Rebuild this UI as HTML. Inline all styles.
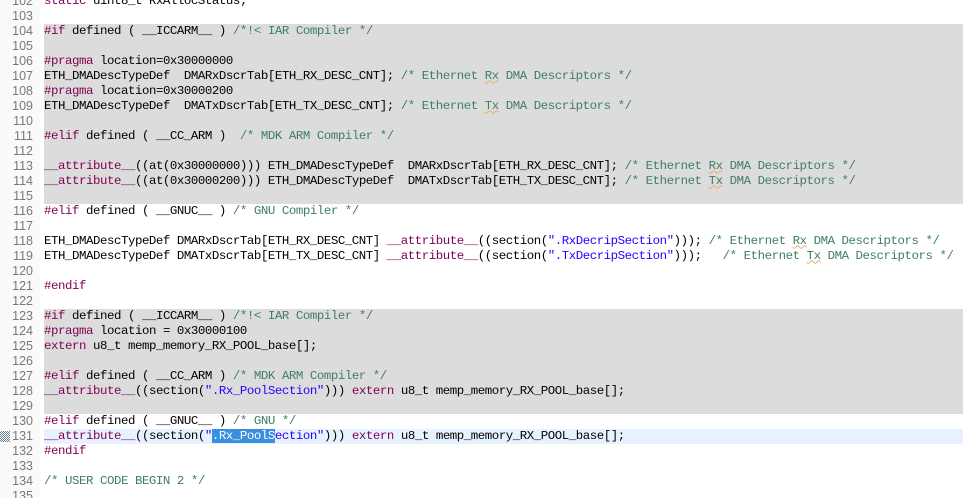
<!DOCTYPE html>
<html><head><meta charset="utf-8"><style>
html,body{margin:0;padding:0;background:#fff;width:963px;height:498px;overflow:hidden}
#w{position:relative;width:963px;height:498px}
.gut{position:absolute;left:0;top:0;width:40px;height:498px;background:#fafafa}
.l{position:absolute;left:0;width:963px;height:15px;font:12.4px/15px "Liberation Mono",monospace;letter-spacing:-0.44px;white-space:pre;color:#000}
.n{position:absolute;left:0;width:33px;text-align:right;color:#787878;font:12.5px/15px "Liberation Sans",sans-serif;letter-spacing:0}
.c{position:absolute;left:44px;right:0;top:0;height:15px}
.g .c{background:#dcdcdc}
.cur .c{background:#e8f2fe}
.k{color:#7f0055}.m{color:#3f7f5f}.s{color:#2a00ff}
.sel{background:#3b8fe0;color:#fff}
.sq{text-decoration:underline wavy #e8b070;text-decoration-thickness:1px;text-underline-offset:1px}
.mk{position:absolute;left:0;top:2px;width:10px;height:11px;background:repeating-conic-gradient(#6a7a8a 0 25%,#fff 0 50%) 0 0/2px 2px}
</style></head><body><div id="w"><div class="gut"></div>
<div class="l" style="top:-6.5px"><span class="n">102</span><span class="c"><span class="k">static</span> uint8_t RxAllocStatus;</span></div>
<div class="l" style="top:8.5px"><span class="n">103</span><span class="c"></span></div>
<div class="l g" style="top:23.5px"><span class="n">104</span><span class="c"><span class="k">#if</span> defined ( __ICCARM__ ) <span class="m">/*!&lt; IAR Compiler */</span></span></div>
<div class="l g" style="top:38.5px"><span class="n">105</span><span class="c"></span></div>
<div class="l g" style="top:53.5px"><span class="n">106</span><span class="c"><span class="k">#pragma</span> location=0x30000000</span></div>
<div class="l g" style="top:68.5px"><span class="n">107</span><span class="c">ETH_DMADescTypeDef  DMARxDscrTab[ETH_RX_DESC_CNT]; <span class="m">/* Ethernet <span class="sq">Rx</span> DMA Descriptors */</span></span></div>
<div class="l g" style="top:83.5px"><span class="n">108</span><span class="c"><span class="k">#pragma</span> location=0x30000200</span></div>
<div class="l g" style="top:98.5px"><span class="n">109</span><span class="c">ETH_DMADescTypeDef  DMATxDscrTab[ETH_TX_DESC_CNT]; <span class="m">/* Ethernet <span class="sq">Tx</span> DMA Descriptors */</span></span></div>
<div class="l g" style="top:113.5px"><span class="n">110</span><span class="c"></span></div>
<div class="l g" style="top:128.5px"><span class="n">111</span><span class="c"><span class="k">#elif</span> defined ( __CC_ARM )  <span class="m">/* MDK ARM Compiler */</span></span></div>
<div class="l g" style="top:143.5px"><span class="n">112</span><span class="c"></span></div>
<div class="l g" style="top:158.5px"><span class="n">113</span><span class="c"><span class="k">__attribute__</span>((at(0x30000000))) ETH_DMADescTypeDef  DMARxDscrTab[ETH_RX_DESC_CNT]; <span class="m">/* Ethernet <span class="sq">Rx</span> DMA Descriptors */</span></span></div>
<div class="l g" style="top:173.5px"><span class="n">114</span><span class="c"><span class="k">__attribute__</span>((at(0x30000200))) ETH_DMADescTypeDef  DMATxDscrTab[ETH_TX_DESC_CNT]; <span class="m">/* Ethernet <span class="sq">Tx</span> DMA Descriptors */</span></span></div>
<div class="l g" style="top:188.5px"><span class="n">115</span><span class="c"></span></div>
<div class="l" style="top:203.5px"><span class="n">116</span><span class="c"><span class="k">#elif</span> defined ( __GNUC__ ) <span class="m">/* GNU Compiler */</span></span></div>
<div class="l" style="top:218.5px"><span class="n">117</span><span class="c"></span></div>
<div class="l" style="top:233.5px"><span class="n">118</span><span class="c">ETH_DMADescTypeDef DMARxDscrTab[ETH_RX_DESC_CNT] <span class="k">__attribute__</span>((section(<span class="s">".RxDecripSection"</span>))); <span class="m">/* Ethernet <span class="sq">Rx</span> DMA Descriptors */</span></span></div>
<div class="l" style="top:248.5px"><span class="n">119</span><span class="c">ETH_DMADescTypeDef DMATxDscrTab[ETH_TX_DESC_CNT] <span class="k">__attribute__</span>((section(<span class="s">".TxDecripSection"</span>)));   <span class="m">/* Ethernet <span class="sq">Tx</span> DMA Descriptors */</span></span></div>
<div class="l" style="top:263.5px"><span class="n">120</span><span class="c"></span></div>
<div class="l" style="top:278.5px"><span class="n">121</span><span class="c"><span class="k">#endif</span></span></div>
<div class="l" style="top:293.5px"><span class="n">122</span><span class="c"></span></div>
<div class="l g" style="top:308.5px"><span class="n">123</span><span class="c"><span class="k">#if</span> defined ( __ICCARM__ ) <span class="m">/*!&lt; IAR Compiler */</span></span></div>
<div class="l g" style="top:323.5px"><span class="n">124</span><span class="c"><span class="k">#pragma</span> location = 0x30000100</span></div>
<div class="l g" style="top:338.5px"><span class="n">125</span><span class="c"><span class="k">extern</span> u8_t memp_memory_RX_POOL_base[];</span></div>
<div class="l g" style="top:353.5px"><span class="n">126</span><span class="c"></span></div>
<div class="l g" style="top:368.5px"><span class="n">127</span><span class="c"><span class="k">#elif</span> defined ( __CC_ARM ) <span class="m">/* MDK ARM Compiler */</span></span></div>
<div class="l g" style="top:383.5px"><span class="n">128</span><span class="c"><span class="k">__attribute__</span>((section(<span class="s">".Rx_PoolSection"</span>))) <span class="k">extern</span> u8_t memp_memory_RX_POOL_base[];</span></div>
<div class="l g" style="top:398.5px"><span class="n">129</span><span class="c"></span></div>
<div class="l" style="top:413.5px"><span class="n">130</span><span class="c"><span class="k">#elif</span> defined ( __GNUC__ ) <span class="m">/* GNU */</span></span></div>
<div class="l cur" style="top:428.5px"><span class="mk"></span><span class="n">131</span><span class="c"><span class="k">__attribute__</span>((section(<span class="s">"</span><span class="sel">.Rx_PoolS</span><span class="s">ection"</span>))) <span class="k">extern</span> u8_t memp_memory_RX_POOL_base[];</span></div>
<div class="l" style="top:443.5px"><span class="n">132</span><span class="c"><span class="k">#endif</span></span></div>
<div class="l" style="top:458.5px"><span class="n">133</span><span class="c"></span></div>
<div class="l" style="top:473.5px"><span class="n">134</span><span class="c"><span class="m">/* USER CODE BEGIN 2 */</span></span></div>
<div class="l" style="top:488.5px"><span class="n">135</span><span class="c"></span></div>
</div></body></html>
